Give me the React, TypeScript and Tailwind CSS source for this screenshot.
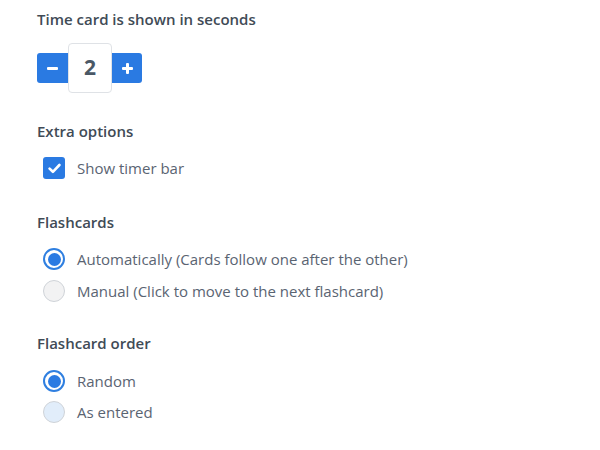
import { useState } from 'react'

const font = { fontFamily: '"Open Sans", "Noto Sans", sans-serif' }

const Radio = ({
  checked,
  soft,
  label,
  onClick,
}: {
  checked: boolean
  soft?: boolean
  label: string
  onClick: () => void
}) => (
  <button className="flex items-center gap-[12px] h-[22px] text-left" onClick={onClick}>
    {checked ? (
      <span className="flex items-center justify-center w-[22px] h-[22px] rounded-full border-2 border-[#2f7fe0] bg-white">
        <span className="w-[13px] h-[13px] rounded-full bg-[#2a7ae2]" />
      </span>
    ) : (
      <span
        className={`w-[22px] h-[22px] rounded-full border border-[#cfd3d8] ${
          soft ? 'bg-[#e1edfa]' : 'bg-[#f2f2f3]'
        }`}
      />
    )}
    <span className="text-[15px] text-[#5a6472]">{label}</span>
  </button>
)

const Heading = ({ children }: { children: string }) => (
  <h2 className="text-[15px] leading-[22px] font-semibold text-[#414b56]">{children}</h2>
)

export default function App() {
  const [seconds, setSeconds] = useState(2)
  const [timerBar, setTimerBar] = useState(true)
  const [mode, setMode] = useState('auto')
  const [order, setOrder] = useState('random')

  return (
    <div className="w-[600px] h-[450px] bg-white pl-[37px] pt-[8px]" style={font}>
      <Heading>Time card is shown in seconds</Heading>
      <div className="flex items-center mt-[13px]">
        <button
          className="w-[31px] h-[30px] bg-[#2a7ae2] rounded-l-[3px] flex items-center justify-center"
          onClick={() => setSeconds(Math.max(1, seconds - 1))}
        >
          <span className="w-[11px] h-[3px] bg-white rounded-[1px]" />
        </button>
        <div className="w-[44px] h-[50px] bg-white border border-[#dfe2e6] rounded-[4px] flex items-center justify-center text-[21px] font-bold text-[#4a5866]">
          {seconds}
        </div>
        <button
          className="w-[30px] h-[30px] bg-[#2a7ae2] rounded-r-[3px] flex items-center justify-center relative"
          onClick={() => setSeconds(seconds + 1)}
        >
          <span className="absolute w-[11px] h-[3px] bg-white rounded-[1px]" />
          <span className="absolute w-[3px] h-[11px] bg-white rounded-[1px]" />
        </button>
      </div>

      <div className="mt-[27px]">
        <Heading>Extra options</Heading>
      </div>
      <div className="mt-[15px] pl-[6px]">
        <button className="flex items-center gap-[12px] h-[22px]" onClick={() => setTimerBar(!timerBar)}>
          <span
            className={`w-[22px] h-[22px] rounded-[3px] flex items-center justify-center ${
              timerBar ? 'bg-[#2a7ae2]' : 'bg-[#f2f2f3] border border-[#d3d7dc]'
            }`}
          >
            {timerBar && (
              <svg width="13" height="11" viewBox="0 0 13 11" fill="none">
                <path d="M1.6 5.6 4.9 8.8 11.4 2" stroke="white" strokeWidth="2.6" strokeLinecap="round" strokeLinejoin="round" />
              </svg>
            )}
          </span>
          <span className="text-[15px] text-[#5a6472]">Show timer bar</span>
        </button>
      </div>

      <div className="mt-[32px]">
        <Heading>Flashcards</Heading>
      </div>
      <div className="mt-[15px] pl-[6px] flex flex-col gap-[10px]">
        <Radio
          checked={mode === 'auto'}
          label="Automatically (Cards follow one after the other)"
          onClick={() => setMode('auto')}
        />
        <Radio
          checked={mode === 'manual'}
          label="Manual (Click to move to the next flashcard)"
          onClick={() => setMode('manual')}
        />
      </div>

      <div className="mt-[30px]">
        <Heading>Flashcard order</Heading>
      </div>
      <div className="mt-[16px] pl-[6px] flex flex-col gap-[9px]">
        <Radio checked={order === 'random'} label="Random" onClick={() => setOrder('random')} />
        <Radio
          checked={order === 'entered'}
          soft
          label="As entered"
          onClick={() => setOrder('entered')}
        />
      </div>
    </div>
  )
}
